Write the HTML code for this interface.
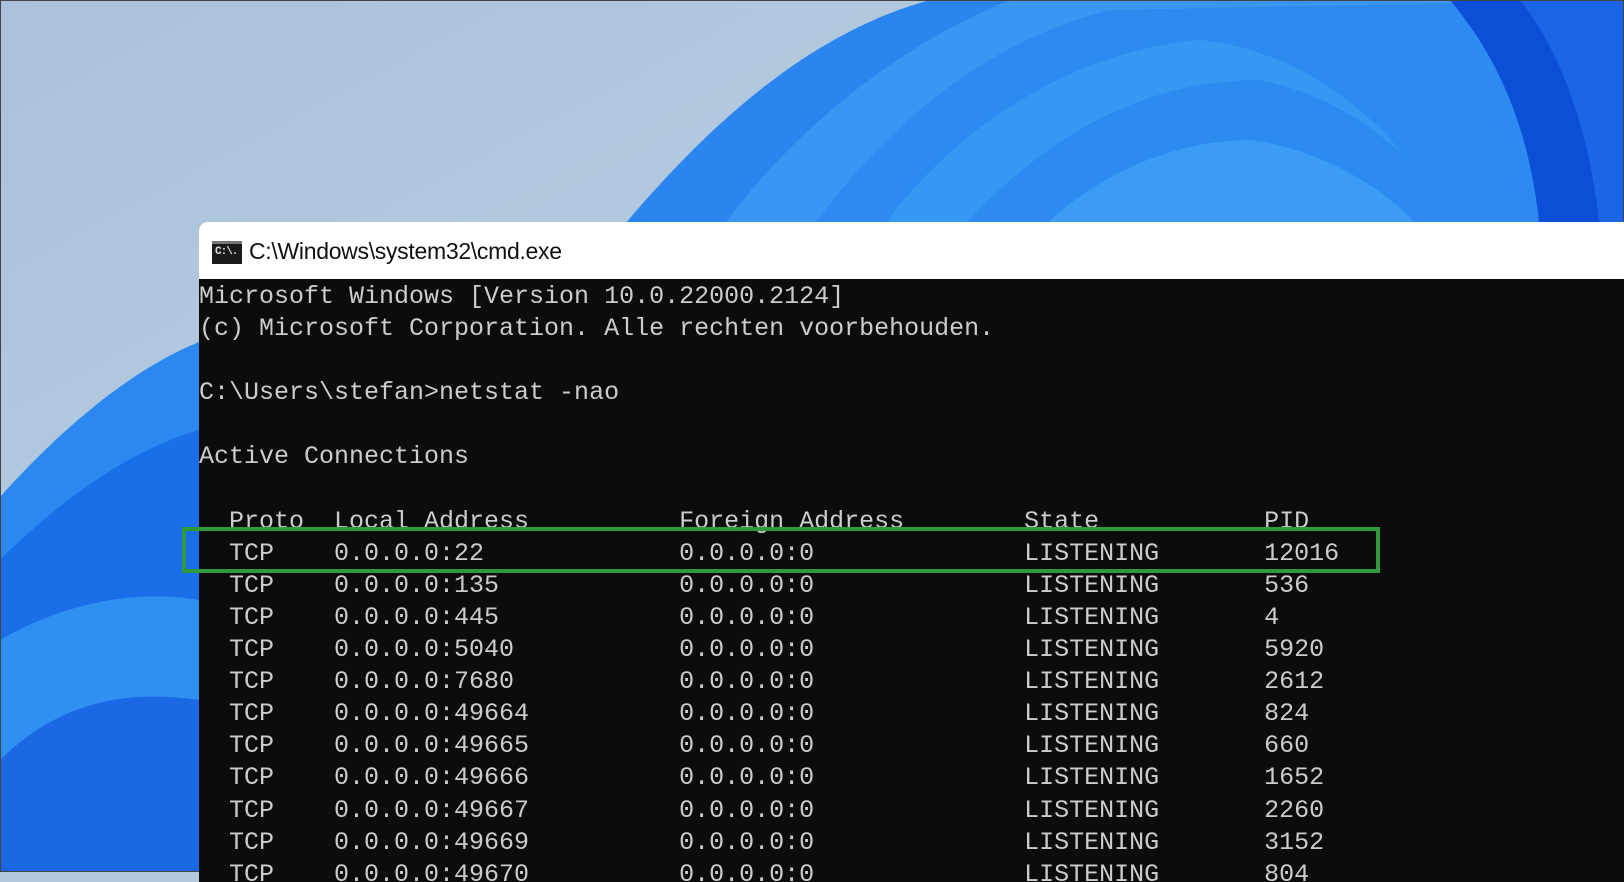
<!DOCTYPE html>
<html><head><meta charset="utf-8"><style>
html,body{margin:0;padding:0;width:1624px;height:872px;overflow:hidden;background:#b3c9de}
#bg{position:absolute;left:0;top:0}
#win{position:absolute;left:199px;top:222px;width:1440px;height:660px;background:#0c0c0c;border-top-left-radius:8px;overflow:hidden}
#title{height:57px;background:#fff;position:relative}
#title span{position:absolute;left:50px;top:16px;font:23px "Liberation Sans",sans-serif;color:#111;letter-spacing:-0.3px}
#icon{position:absolute;left:13px;top:19px;width:30px;height:23px;background:#1a1a1a;border-top:3px solid #777;box-sizing:border-box}
#icon b{position:absolute;left:3px;top:2px;font:bold 11px "Liberation Mono",monospace;color:#ddd;letter-spacing:-1px}
pre{margin:0;padding-top:2px;font:25px/32.1px "Liberation Mono",monospace;color:#cccccc;white-space:pre}
#box{position:absolute;left:182px;top:527px;width:1198px;height:46px;border:4px solid #2e9a3c;box-sizing:border-box}
</style></head><body>
<svg id="bg" width="1624" height="872" viewBox="0 0 1624 872">
<defs>
<linearGradient id="sky" x1="0" y1="0" x2="1" y2="1"><stop offset="0" stop-color="#a9c1da"/><stop offset="0.5" stop-color="#b7cde0"/><stop offset="1" stop-color="#a9c0d6"/></linearGradient>
</defs>
<rect width="1624" height="872" fill="url(#sky)"/>
<path d="M620 230 C720 110 820 30 930 0 L1624 0 L1624 230 Z" fill="#2a86ee"/>
<path d="M720 230 C800 120 910 40 1010 0 L1624 0 L1624 230 Z" fill="#3a95f3"/>
<path d="M810 230 C890 120 990 40 1110 10 L1624 0 L1624 230 Z" fill="#2d8af0"/>
<path d="M880 230 C960 120 1080 50 1200 40 C1300 50 1400 120 1450 230 Z" fill="#3798f4"/>
<path d="M960 230 C1040 140 1140 80 1260 80 C1360 100 1430 170 1460 230 Z" fill="#2c8af0"/>
<path d="M1040 230 C1100 170 1180 140 1250 140 C1330 150 1400 200 1420 230 Z" fill="#3b9bf5"/>
<path d="M1450 0 L1624 0 L1624 230 L1540 230 C1530 130 1500 60 1450 0Z" fill="#0b4fd6"/>
<path d="M1520 0 L1624 0 L1624 230 L1600 230 C1590 130 1560 50 1520 0Z" fill="#1a66e6"/>
<path d="M0 497 C60 430 130 370 199 342 L199 872 L0 872 Z" fill="#2a88f0"/>
<path d="M0 560 C60 500 130 450 199 430 L199 872 L0 872 Z" fill="#1a6fe8"/>
<path d="M0 640 C70 600 140 590 199 600 L199 872 L0 872 Z" fill="#2f8ff2"/>
<path d="M0 760 C60 700 130 690 199 700 L199 872 L0 872 Z" fill="#1b68e4"/>
<rect x="0.5" y="0.5" width="1623" height="871" fill="none" stroke="#444" stroke-width="1"/>
</svg>
<div id="win">
<div id="title"><div id="icon"><b>C:\.</b></div><span>C:\Windows\system32\cmd.exe</span></div>
<pre>Microsoft Windows [Version 10.0.22000.2124]
(c) Microsoft Corporation. Alle rechten voorbehouden.

C:\Users\stefan&gt;netstat -nao

Active Connections

  Proto  Local Address          Foreign Address        State           PID
  TCP    0.0.0.0:22             0.0.0.0:0              LISTENING       12016
  TCP    0.0.0.0:135            0.0.0.0:0              LISTENING       536
  TCP    0.0.0.0:445            0.0.0.0:0              LISTENING       4
  TCP    0.0.0.0:5040           0.0.0.0:0              LISTENING       5920
  TCP    0.0.0.0:7680           0.0.0.0:0              LISTENING       2612
  TCP    0.0.0.0:49664          0.0.0.0:0              LISTENING       824
  TCP    0.0.0.0:49665          0.0.0.0:0              LISTENING       660
  TCP    0.0.0.0:49666          0.0.0.0:0              LISTENING       1652
  TCP    0.0.0.0:49667          0.0.0.0:0              LISTENING       2260
  TCP    0.0.0.0:49669          0.0.0.0:0              LISTENING       3152
  TCP    0.0.0.0:49670          0.0.0.0:0              LISTENING       804</pre>
</div>
<div id="box"></div>
</body></html>
